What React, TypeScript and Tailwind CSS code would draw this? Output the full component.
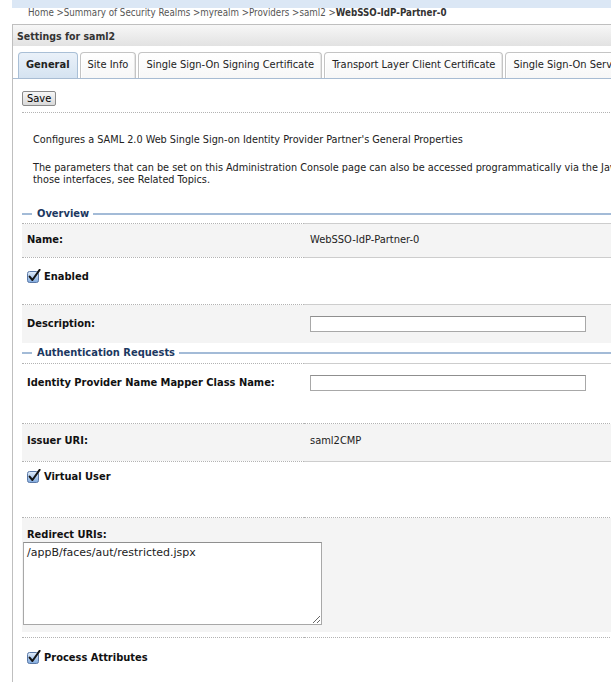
import React from "react";

function Check() {
  return (
    <svg width="14" height="14" viewBox="0 0 14 14" className="shrink-0">
      <defs>
        <linearGradient id="cbg" x1="0" y1="0" x2="0" y2="1">
          <stop offset="0" stopColor="#e3eefb" />
          <stop offset="1" stopColor="#7fa9dd" />
        </linearGradient>
      </defs>
      <rect x="0.5" y="2.5" width="11" height="11" rx="2" fill="url(#cbg)" stroke="#5a78a6" />
      <path d="M2.6 7.6 L5.4 11 L12.6 0.9" fill="none" stroke="#141414" strokeWidth="2" strokeLinecap="round" strokeLinejoin="round" />
    </svg>
  );
}

function Sep({ full }: { full?: boolean }) {
  return (
    <div className="flex h-px">
      <div className="w-[282px] border-t border-dotted border-[#b3b3b3]" />
      {full ? (
        <div className="flex-1 border-t border-dotted border-[#b3b3b3]" />
      ) : (
        <div className="flex-1 border-t border-solid border-[#cdcdcd]" />
      )}
    </div>
  );
}

function Legend({ title }: { title: string }) {
  return (
    <div className="flex items-center h-[12px]">
      <div className="w-[10px] h-[2px] bg-[#a3bbd7]" />
      <span className="pl-[5px] pr-[4px] font-bold text-[#1c3861] leading-[12px] whitespace-nowrap">{title}</span>
      <div className="flex-1 h-[2px] bg-[#a3bbd7]" />
    </div>
  );
}

function Tab({ label, active }: { label: string; active?: boolean }) {
  return active ? (
    <div className="h-[26px] px-[7px] flex items-center border border-b-0 border-[#a9bfd6] rounded-t-[4px] bg-gradient-to-b from-[#eaf1f9] to-[#d5e3f1] font-bold text-[#222] whitespace-nowrap">
      {label}
    </div>
  ) : (
    <div className="h-[26px] px-[7px] flex items-center border border-b-0 border-[#c4c4c4] rounded-t-[4px] bg-gradient-to-b from-[#ffffff] to-[#f7f7f7] shadow-[inset_1px_1px_0_#ffffff,inset_-1px_0_0_#e6e6e6] text-[#222] whitespace-nowrap">
      {label}
    </div>
  );
}

export default function App() {
  return (
    <div className="w-[611px] h-[682px] overflow-hidden bg-white text-[11px] text-[#222] font-['DejaVu_Sans_Condensed','DejaVu_Sans',sans-serif]">
      <div className="ml-[12px] h-[8px] bg-[#dbe7f5]" />
      <div className="h-[16px] pl-[28px] leading-[10px] text-[9.7px] text-[#555] whitespace-nowrap font-['Liberation_Sans_Narrow','DejaVu_Sans_Condensed',sans-serif]">
        Home &gt;Summary of Security Realms &gt;myrealm &gt;Providers &gt;saml2 &gt;
        <span className="font-bold text-[#333]">WebSSO-IdP-Partner-0</span>
      </div>
      <div className="ml-[12px] w-[800px] h-[700px] border-l border-t border-[#bfbfbf]">
        <div className="h-[21px] px-[4px] pt-[1px] leading-[21px] text-[10.5px] font-bold text-[#333] bg-gradient-to-b from-[#f7f7f7] to-[#e2e2e2]">
          Settings for saml2
        </div>
        <div className="mt-[6px] h-[27px] pl-[5px] flex items-end gap-[2px] border-b border-[#a8bcd3]">
          <Tab label="General" active />
          <Tab label="Site Info" />
          <Tab label="Single Sign-On Signing Certificate" />
          <Tab label="Transport Layer Client Certificate" />
          <Tab label="Single Sign-On Service Endpoints" />
          <Tab label="Artifact Resolution Endpoints" />
        </div>
        <div className="pl-[9px]">
          <div className="mt-[12px] flex">
            <div className="h-[15px] px-[4px] flex items-center border border-[#8a8a8a] rounded-[2px] bg-gradient-to-b from-[#f7f7f7] to-[#d9d9d9] text-black leading-[13px]">
              Save
            </div>
          </div>
          <div className="mt-[6px] border-t border-dotted border-[#b3b3b3]" />
          <div className="pl-[11px] leading-[12px] whitespace-nowrap text-[10.8px]">
            <p className="mt-[21px]">Configures a SAML 2.0 Web Single Sign-on Identity Provider Partner's General Properties</p>
            <p className="mt-[16px]">
              The parameters that can be set on this Administration Console page can also be accessed programmatically via the Java interfaces that are identified in this help topic. For API information about
              <br />
              those interfaces, see Related Topics.
            </p>
          </div>

          <div className="mt-[22px]">
            <Legend title="Overview" />
          </div>
          <div className="mt-[3px]">
            <Sep />
          </div>
          <div className="h-[33px] flex items-center bg-[#f4f4f4]">
            <div className="w-[282px] pl-[5px] font-bold text-[#111]">Name:</div>
            <div className="pl-[6px]">WebSSO-IdP-Partner-0</div>
          </div>
          <Sep />
          <div className="h-[46px] pt-[11px] pl-[5px]">
            <div className="flex items-center gap-[3px] h-[14px] font-bold text-[#111]">
              <Check />
              <span className="pt-[2px]">Enabled</span>
            </div>
          </div>
          <Sep />
          <div className="h-[38px] flex items-center bg-[#f4f4f4]">
            <div className="w-[282px] pl-[5px] font-bold text-[#111]">Description:</div>
            <div className="pl-[6px]">
              <div className="w-[276px] h-[16px] border border-[#a8a8a8] border-t-[#8f8f8f] bg-white" />
            </div>
          </div>

          <div className="mt-[4px]">
            <Legend title="Authentication Requests" />
          </div>
          <div className="mt-[4px]">
            <Sep />
          </div>
          <div className="h-[59px] pt-[11px] flex items-start">
            <div className="w-[282px] h-[16px] flex items-center pl-[5px] font-bold text-[#111] whitespace-nowrap">
              Identity Provider Name Mapper Class Name:
            </div>
            <div className="pl-[6px]">
              <div className="w-[276px] h-[16px] border border-[#a8a8a8] border-t-[#8f8f8f] bg-white" />
            </div>
          </div>
          <Sep full />
          <div className="h-[37px] pt-[11px] flex items-start bg-[#f4f4f4] leading-[12px]">
            <div className="w-[282px] pl-[5px] font-bold text-[#111]">Issuer URI:</div>
            <div className="pl-[6px]">saml2CMP</div>
          </div>
          <Sep />
          <div className="h-[55px] pt-[7px] pl-[5px]">
            <div className="flex items-center gap-[3px] h-[14px] font-bold text-[#111]">
              <Check />
              <span className="pt-[2px]">Virtual User</span>
            </div>
          </div>
          <Sep full />
          <div className="h-[114px] pt-[11px] bg-[#f4f4f4]">
            <div className="pl-[5px] leading-[12px] font-bold text-[#111]">Redirect URIs:</div>
            <textarea
              readOnly
              defaultValue="/appB/faces/aut/restricted.jspx"
              className="block mt-[1px] ml-[1px] w-[299px] h-[83px] px-[3px] pt-[3px] border border-[#a8a8a8] border-t-[#8f8f8f] bg-white text-[11px] leading-[14px] text-[#222] font-['DejaVu_Sans',sans-serif] outline-none"
            />
          </div>
          <div className="h-[5px]" />
          <Sep full />
          <div className="pt-[12px] pl-[5px]">
            <div className="flex items-center gap-[3px] h-[14px] font-bold text-[#111]">
              <Check />
              <span className="pt-[2px]">Process Attributes</span>
            </div>
          </div>
        </div>
      </div>
    </div>
  );
}
